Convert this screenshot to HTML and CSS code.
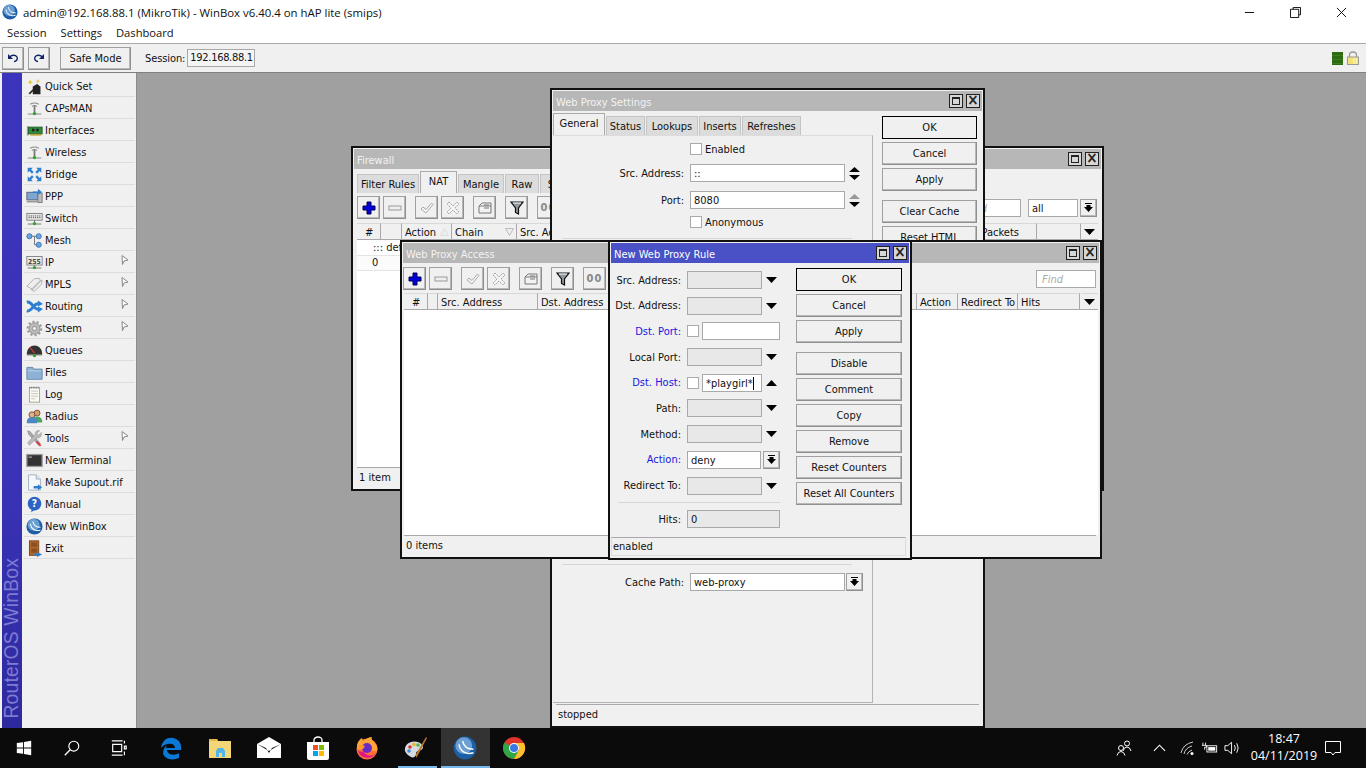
FILE: index.html
```html
<!DOCTYPE html>
<html lang="en">
<head>
    <meta charset="UTF-8">
    <title>WinBox</title>
    <link rel="stylesheet" href="styles.css">
</head>
<body>
    <svg class="defs" width="0" height="0">
        <symbol id="antenna" viewBox="0 0 20 20">
            <path d="M5 5q5-3 10 0M7 7.500q3-2 6 0" fill="none" stroke="#888" stroke-width="1.200"/>
            <path d="M10 7v9" stroke="#777" stroke-width="2"/>
            <path d="M2 16.500h16" stroke="#777"/>
            <circle cx="10" cy="16" r="2" fill="#2fa52f"/>
        </symbol>
        <symbol id="more" viewBox="0 0 8 10">
            <path d="M1 .5l6 4.500-4 1-1.500 3.500z" fill="#fff" stroke="#888"/>
        </symbol>
        <symbol id="down" viewBox="0 0 11 6"><path d="M0 0h11L5.500 6z" fill="#000"/></symbol>
        <symbol id="up" viewBox="0 0 11 6"><path d="M0 6h11L5.500 0z" fill="#000"/></symbol>
        <symbol id="drop" viewBox="0 0 11 10"><path d="M2 0h7v1H2zM3.500 2h4v2h2.500L5.500 9 1 4h2.500z" fill="#000"/></symbol>
        <symbol id="plus" viewBox="0 0 14 14"><path d="M5 1h4v4h4v4H9v4H5V9H1V5h4z" fill="#0000d8" stroke="#000050"/></symbol>
        <symbol id="minus" viewBox="0 0 14 14"><rect x="1" y="5" width="12" height="4" fill="#eee" stroke="#999"/></symbol>
        <symbol id="check" viewBox="0 0 14 14"><path d="M1 8l2-2 3 2.500L11.500 2 13 3.500 6 12z" fill="#f4f4f4" stroke="#aaa"/></symbol>
        <symbol id="cross" viewBox="0 0 14 14"><path d="M3 1l4 4 4-4 2 2-4 4 4 4-2 2-4-4-4 4-2-2 4-4-4-4z" fill="#f4f4f4" stroke="#aaa" stroke-dasharray="2 .6"/></symbol>
        <symbol id="note" viewBox="0 0 14 14"><path d="M1 5l3-3h9v10H1zM1 5h12M6 4h5M6 7h5" fill="#f2f2f2" stroke="#777"/></symbol>
        <symbol id="filter" viewBox="0 0 14 14"><path d="M1 1h12L8.500 7v6l-3-1.500V7z" fill="#8e9aa0" stroke="#111" stroke-width="1.200"/><path d="M3 2h8" stroke="#fff"/></symbol>
        <symbol id="sort-up" viewBox="0 0 9 8"><path d="M.5 7.500h8L4.500.5z" fill="#eee" stroke="#ddd"/></symbol>
        <symbol id="sort-down" viewBox="0 0 9 8"><path d="M.5.5h8l-4 7z" fill="#eee" stroke="#bbb"/></symbol>
        <symbol id="winbox" viewBox="0 0 20 20">
            <circle cx="10" cy="10" r="9.500" fill="#1d5fa6"/>
            <circle cx="9" cy="8" r="7" fill="#6b9fd3"/>
            <path d="M5 7c1 6 6 9 12 7M8 4c1 5 4 7 9 7" fill="none" stroke="#fff" stroke-width="1.200"/>
        </symbol>
    </svg>

    <div class="app-title">
        <svg class="app-logo" viewBox="0 0 20 20"><use href="#winbox"/></svg>
        <span class="app-name">admin@192.168.88.1 (MikroTik) - WinBox v6.40.4 on hAP lite (smips)</span>
        <div class="win-controls">
            <svg viewBox="0 0 12 12"><path d="M1 6h10" stroke="#000"/></svg>
            <svg viewBox="0 0 12 12"><path d="M3.500 2.500v-2h8v8h-2M.5 2.500h9v9h-9z" fill="none" stroke="#000"/></svg>
            <svg viewBox="0 0 12 12"><path d="M1 1l10 10M11 1L1 11" stroke="#000"/></svg>
        </div>
    </div>
    <div class="app-menu">
        <span>Session</span>
        <span>Settings</span>
        <span>Dashboard</span>
    </div>
    <div class="toolbar">
        <button class="btn tool-btn">
            <svg viewBox="0 0 12 12"><path d="M1 2v5h5z" fill="#12246a"/><path d="M2.500 5.500C4 2.500 8.500 2.500 10 5c1 2-.5 4.500-3 4.500" fill="none" stroke="#12246a" stroke-width="1.400"/></svg>
        </button>
        <button class="btn tool-btn">
            <svg viewBox="0 0 12 12"><path d="M11 2v5H6z" fill="#12246a"/><path d="M9.500 5.500C8 2.500 3.500 2.500 2 5c-1 2 .5 4.500 3 4.500" fill="none" stroke="#12246a" stroke-width="1.400"/></svg>
        </button>
        <button class="btn safe-mode">Safe Mode</button>
        <span class="session-label">Session:</span>
        <span class="session-value">192.168.88.1</span>
        <div class="status-icons">
            <span class="green-led"></span>
            <svg class="lock" viewBox="0 0 12 14">
                <path d="M2.500 6V4a3.500 3 0 0 1 7 0v2" fill="none" stroke="#999" stroke-width="1.300"/>
                <rect x=".5" y="6" width="11" height="7.500" fill="#f6e27a" stroke="#999"/>
                <path d="M7 7v6M9.500 7v6" stroke="#fff6b0"/>
            </svg>
        </div>
    </div>

    <div class="main">
        <aside class="sidebar">
            <div class="brand"><span>RouterOS WinBox</span></div>
            <nav class="nav">
                <div class="nav-item">
                    <svg class="nav-icon" viewBox="0 0 20 20"><path d="M3 18l9-9 1.500 1.500-9 9z" fill="#333"/><path d="M8 19V10l5-3 4 3v9z" fill="#222"/><path d="M5 2l1 2 2 1-2 1-1 2-1-2-2-1 2-1zM14 1l.7 2 2 .7-2 .7-.7 2-.7-2-2-.7 2-.7z" fill="#e3c53c"/></svg>
                    Quick Set
                </div>
                <div class="nav-item"><svg class="nav-icon"><use href="#antenna"/></svg>CAPsMAN</div>
                <div class="nav-item">
                    <svg class="nav-icon" viewBox="0 0 20 20"><path d="M1 5h2v11H1z" fill="#999"/><rect x="3" y="6" width="16" height="8" fill="#2e8b3a" stroke="#1b5a25"/><path d="M7 8h3v3H7zM12 8h3v3h-3z" fill="#222"/><path d="M5 14h13v2H5z" fill="#b9a23a"/></svg>
                    Interfaces
                </div>
                <div class="nav-item"><svg class="nav-icon"><use href="#antenna"/></svg>Wireless</div>
                <div class="nav-item">
                    <svg class="nav-icon" viewBox="0 0 20 20"><g fill="#2f7fd0"><path d="M2 2h6L6 4l3 3-2 2-3-3-2 2zM18 2v6l-2-2-3 3-2-2 3-3-2-2zM2 18v-6l2 2 3-3 2 2-3 3 2 2zM18 18h-6l2-2-3-3 2-2 3 3 2-2z"/></g></svg>
                    Bridge
                </div>
                <div class="nav-item">
                    <svg class="nav-icon" viewBox="0 0 20 20"><rect x="1" y="5" width="13" height="9" fill="#7fa6cf" stroke="#557"/><rect x="14" y="6" width="5" height="11" fill="#bbb" stroke="#777"/><path d="M1 15h13v2H1z" fill="#999"/><path d="M8 4h6V1l5 4-5 3V6H8z" fill="#2f7fd0"/></svg>
                    PPP
                </div>
                <div class="nav-item">
                    <svg class="nav-icon" viewBox="0 0 20 20"><rect x="1" y="4" width="18" height="8" fill="#e8e8e8" stroke="#777"/><path d="M3 7h14M3 9h14" stroke="#444" stroke-dasharray="1.500 1"/><path d="M10 12v4M2 16.500h16" stroke="#666"/><circle cx="10" cy="16" r="2" fill="#2fa52f"/></svg>
                    Switch
                </div>
                <div class="nav-item">
                    <svg class="nav-icon" viewBox="0 0 20 20"><path d="M5 5h10M10 5v10h5" fill="none" stroke="#666"/><circle cx="4" cy="5" r="3" fill="#6fa6dd" stroke="#2f6fb0"/><circle cx="15" cy="5" r="3" fill="#6fa6dd" stroke="#2f6fb0"/><circle cx="15" cy="15" r="3" fill="#6fa6dd" stroke="#2f6fb0"/></svg>
                    Mesh
                </div>
                <div class="nav-item">
                    <svg class="nav-icon" viewBox="0 0 20 20"><rect x="1" y="3" width="18" height="10" fill="#eee" stroke="#777"/><text x="10" y="11.500" class="ip-text">255</text><path d="M10 13v3M2 16.500h16" stroke="#666"/><circle cx="10" cy="16" r="2" fill="#2fa52f"/></svg>
                    IP<svg class="more"><use href="#more"/></svg>
                </div>
                <div class="nav-item">
                    <svg class="nav-icon" viewBox="0 0 20 20"><path d="M1 12l9-9h6l1 3-9 10zM6 16l9-9 4-2-1 5-8 8z" fill="#eee" stroke="#aaa"/></svg>
                    MPLS<svg class="more"><use href="#more"/></svg>
                </div>
                <div class="nav-item">
                    <svg class="nav-icon" viewBox="0 0 20 20"><path d="M1 5c6-2 8 10 14 8M1 15c6 2 8-10 14-8" fill="none" stroke="#2f7fd0" stroke-width="3.500"/><path d="M14 3l6 4-6 3zM14 10l6 3-6 4z" fill="#2f7fd0"/></svg>
                    Routing<svg class="more"><use href="#more"/></svg>
                </div>
                <div class="nav-item">
                    <svg class="nav-icon" viewBox="0 0 20 20"><circle cx="10" cy="10" r="6.500" fill="#bbb" stroke="#888" stroke-width="1"/><circle cx="10" cy="10" r="8" fill="none" stroke="#999" stroke-width="2.500" stroke-dasharray="2.500 2.500"/><circle cx="10" cy="10" r="2.500" fill="#eee" stroke="#888"/></svg>
                    System<svg class="more"><use href="#more"/></svg>
                </div>
                <div class="nav-item">
                    <svg class="nav-icon" viewBox="0 0 20 20"><path d="M1 13a9 9 0 0 1 18 0v1H1z" fill="#333"/><path d="M5 7l5 6" stroke="#e33" stroke-width="1.300"/><path d="M1 15h18" stroke="#666" stroke-width="1.500"/><circle cx="10" cy="16" r="2" fill="#2fa52f"/></svg>
                    Queues
                </div>
                <div class="nav-item">
                    <svg class="nav-icon" viewBox="0 0 20 20"><path d="M1 4h7l1 2h10v12H1z" fill="#8db2d6" stroke="#5a82a8"/><path d="M2 8h16" stroke="#c4d8ea"/></svg>
                    Files
                </div>
                <div class="nav-item">
                    <svg class="nav-icon" viewBox="0 0 20 20"><rect x="4" y="2" width="12" height="17" fill="#fbfbf2" stroke="#999"/><path d="M6 6h8M6 9h8M6 12h8M6 15h5" stroke="#bbb"/><path d="M4 2h12" stroke="#777" stroke-dasharray="1 1" stroke-width="2"/></svg>
                    Log
                </div>
                <div class="nav-item">
                    <svg class="nav-icon" viewBox="0 0 20 20"><circle cx="13" cy="6" r="3.500" fill="#d9a06a" stroke="#643"/><path d="M8 17v-3q1-4 5-4t6 4v3z" fill="#4aa564"/><circle cx="7" cy="8" r="3.500" fill="#e3b287" stroke="#643"/><path d="M1 18v-3q1-4 6-4t6 4v3z" fill="#4d86c6"/></svg>
                    Radius
                </div>
                <div class="nav-item">
                    <svg class="nav-icon" viewBox="0 0 20 20"><path d="M2 1l3 1 12 14-2 2L3 5z" fill="#aaa" stroke="#666" stroke-width=".5"/><path d="M18 3l-3 3-2-1 0-2 3-2c-3-1-6 1-5 4L2 15l2 3 9-9c3 1 6-2 5-6z" fill="#bbb" stroke="#777" stroke-width=".5"/><path d="M13 13l5 5-1.500 1.500-5-5z" fill="#d33"/></svg>
                    Tools<svg class="more"><use href="#more"/></svg>
                </div>
                <div class="nav-item">
                    <svg class="nav-icon" viewBox="0 0 20 20"><rect x="1" y="3" width="18" height="14" fill="#333" stroke="#999" stroke-width="1.500"/><path d="M3 6h4" stroke="#ddd"/></svg>
                    New Terminal
                </div>
                <div class="nav-item">
                    <svg class="nav-icon" viewBox="0 0 20 20"><path d="M3 1h9l5 5v13H3z" fill="#f4f8fb" stroke="#9ab"/><path d="M12 1v5h5" fill="#dde" stroke="#9ab"/><path d="M9 14h5v-2l5 3.500-5 3.500v-2H9z" fill="#2f7fd0"/></svg>
                    Make Supout.rif
                </div>
                <div class="nav-item">
                    <svg class="nav-icon" viewBox="0 0 20 20"><circle cx="10" cy="9" r="8" fill="#2b63c4"/><path d="M7 15l-1 4 5-3z" fill="#2b63c4"/><text x="10" y="13.500" class="manual-text">?</text></svg>
                    Manual
                </div>
                <div class="nav-item"><svg class="nav-icon"><use href="#winbox"/></svg>New WinBox</div>
                <div class="nav-item">
                    <svg class="nav-icon" viewBox="0 0 20 20"><rect x="4" y="1" width="11" height="17" fill="#b5682c" stroke="#6d3d17"/><rect x="6" y="3" width="7" height="5" fill="#8e4f20"/><rect x="6" y="10" width="7" height="5" fill="#8e4f20"/><path d="M9 16h4v-2h0l6 3-6 3v-2H9z" fill="#2f7fd0"/></svg>
                    Exit
                </div>
            </nav>
        </aside>

        <main class="desktop">
            <section class="window firewall">
                <div class="win-title"><span>Firewall</span><span class="win-btn-max"></span><span class="win-btn-close"></span></div>
                <div class="tabs">
                    <span class="tab tab-filter">Filter Rules</span>
                    <span class="tab tab-nat tab-active">NAT</span>
                    <span class="tab tab-mangle">Mangle</span>
                    <span class="tab tab-raw">Raw</span>
                    <span class="tab tab-more">Service Ports</span>
                </div>
                <div class="list-tools">
                    <button class="btn icon-btn"><svg><use href="#plus"/></svg></button>
                    <button class="btn icon-btn"><svg><use href="#minus"/></svg></button>
                    <button class="btn icon-btn gap-left"><svg><use href="#check"/></svg></button>
                    <button class="btn icon-btn"><svg><use href="#cross"/></svg></button>
                    <button class="btn icon-btn gap-left"><svg><use href="#note"/></svg></button>
                    <button class="btn icon-btn gap-left"><svg><use href="#filter"/></svg></button>
                    <button class="btn icon-btn gap-left zeros">00</button>
                    <div class="tools-right">
                        <span class="field find-field">Find</span>
                        <span class="field all-field">all</span>
                        <button class="btn drop-btn"><svg><use href="#drop"/></svg></button>
                    </div>
                </div>
                <div class="table">
                    <div class="thead">
                        <span class="th fw-num">#</span>
                        <span class="th fw-blank"></span>
                        <span class="th fw-action">Action<svg class="sort"><use href="#sort-up"/></svg></span>
                        <span class="th fw-chain">Chain<svg class="sort"><use href="#sort-down"/></svg></span>
                        <span class="th fw-src">Src. Address</span>
                        <span class="th fw-packets">Packets</span>
                        <span class="th fw-fill"></span>
                        <span class="th th-menu"><svg><use href="#down"/></svg></span>
                    </div>
                    <div class="tbody">
                        <div class="comment-row">::: def</div>
                        <div class="num-row">0</div>
                    </div>
                </div>
                <div class="status">1 item</div>
            </section>

            <section class="window settings">
                <div class="win-title"><span>Web Proxy Settings</span><span class="win-btn-max"></span><span class="win-btn-close"></span></div>
                <div class="settings-body">
                    <div class="settings-left">
                        <div class="tabs settings-tabs">
                            <span class="tab tab-general tab-active">General</span>
                            <span class="tab tab-status">Status</span>
                            <span class="tab tab-lookups">Lookups</span>
                            <span class="tab tab-inserts">Inserts</span>
                            <span class="tab tab-refreshes">Refreshes</span>
                        </div>
                        <div class="panel">
                            <div class="set-row"><span class="set-label"></span><span class="check"></span><span class="check-text">Enabled</span></div>
                            <div class="set-row src-row"><span class="set-label">Src. Address:</span><span class="field white set-field">::</span><svg class="spin" viewBox="0 0 11 13"><path d="M0 5h11L5.500 0zM0 8h11l-5.500 5z"/></svg></div>
                            <div class="set-row port-row"><span class="set-label">Port:</span><span class="field white set-field">8080</span><svg class="spin" viewBox="0 0 11 13"><path d="M0 5h11L5.500 0z" fill="#999"/><path d="M0 8h11l-5.500 5z"/></svg></div>
                            <div class="set-row anon-row"><span class="set-label"></span><span class="check"></span><span class="check-text">Anonymous</span></div>
                            <hr class="sep">
                            <hr class="sep sep-low">
                            <div class="set-row"><span class="set-label">Cache Path:</span><span class="field white set-field">web-proxy</span><button class="btn drop-btn"><svg><use href="#drop"/></svg></button></div>
                        </div>
                    </div>
                    <div class="actions settings-actions">
                        <button class="btn action-btn default-btn">OK</button>
                        <button class="btn action-btn">Cancel</button>
                        <button class="btn action-btn">Apply</button>
                        <button class="btn action-btn group-start">Clear Cache</button>
                        <button class="btn action-btn">Reset HTML</button>
                    </div>
                </div>
                <div class="status">stopped</div>
            </section>

            <section class="window access">
                <div class="win-title"><span>Web Proxy Access</span><span class="win-btn-max"></span><span class="win-btn-close"></span></div>
                <div class="list-tools">
                    <button class="btn icon-btn"><svg><use href="#plus"/></svg></button>
                    <button class="btn icon-btn"><svg><use href="#minus"/></svg></button>
                    <button class="btn icon-btn gap-left"><svg><use href="#check"/></svg></button>
                    <button class="btn icon-btn"><svg><use href="#cross"/></svg></button>
                    <button class="btn icon-btn gap-left"><svg><use href="#note"/></svg></button>
                    <button class="btn icon-btn gap-left"><svg><use href="#filter"/></svg></button>
                    <button class="btn icon-btn gap-left zeros">00</button>
                    <div class="tools-right">
                        <span class="field find-field access-find">Find</span>
                    </div>
                </div>
                <div class="table">
                    <div class="thead">
                        <span class="th ac-num">#</span>
                        <span class="th ac-blank"></span>
                        <span class="th ac-src">Src. Address</span>
                        <span class="th ac-dst">Dst. Address</span>
                        <span class="th ac-action">Action</span>
                        <span class="th ac-redirect">Redirect To</span>
                        <span class="th ac-hits">Hits</span>
                        <span class="th th-menu"><svg><use href="#down"/></svg></span>
                    </div>
                    <div class="tbody"></div>
                </div>
                <div class="status">0 items</div>
            </section>

            <section class="window rule">
                <div class="win-title active"><span>New Web Proxy Rule</span><span class="win-btn-max"></span><span class="win-btn-close"></span></div>
                <div class="rule-body">
                    <form class="rule-form">
                        <div class="rule-row"><span class="rule-label">Src. Address:</span><span class="field off"></span><svg class="arrow"><use href="#down"/></svg></div>
                        <div class="rule-row"><span class="rule-label">Dst. Address:</span><span class="field off"></span><svg class="arrow"><use href="#down"/></svg></div>
                        <div class="rule-row"><span class="rule-label blue">Dst. Port:</span><span class="check"></span><span class="field white short"></span></div>
                        <div class="rule-row"><span class="rule-label">Local Port:</span><span class="field off"></span><svg class="arrow"><use href="#down"/></svg></div>
                        <div class="rule-row"><span class="rule-label blue">Dst. Host:</span><span class="check"></span><span class="field white host">*playgirl*<i class="caret"></i></span><svg class="arrow arrow-host"><use href="#up"/></svg></div>
                        <div class="rule-row"><span class="rule-label">Path:</span><span class="field off"></span><svg class="arrow"><use href="#down"/></svg></div>
                        <div class="rule-row"><span class="rule-label">Method:</span><span class="field off"></span><svg class="arrow"><use href="#down"/></svg></div>
                        <div class="rule-row"><span class="rule-label blue">Action:</span><span class="field white action-field">deny</span><button class="btn drop-btn" type="button"><svg><use href="#drop"/></svg></button></div>
                        <div class="rule-row"><span class="rule-label">Redirect To:</span><span class="field off"></span><svg class="arrow"><use href="#down"/></svg></div>
                        <hr class="rule-sep">
                        <div class="rule-row"><span class="rule-label">Hits:</span><span class="field off wide">0</span></div>
                    </form>
                    <div class="actions rule-actions">
                        <button class="btn action-btn default-btn">OK</button>
                        <button class="btn action-btn">Cancel</button>
                        <button class="btn action-btn">Apply</button>
                        <button class="btn action-btn group-start">Disable</button>
                        <button class="btn action-btn">Comment</button>
                        <button class="btn action-btn">Copy</button>
                        <button class="btn action-btn">Remove</button>
                        <button class="btn action-btn">Reset Counters</button>
                        <button class="btn action-btn">Reset All Counters</button>
                    </div>
                </div>
                <div class="status">enabled</div>
            </section>
        </main>
    </div>

    <footer class="taskbar">
        <div class="task-icon">
            <svg viewBox="0 0 20 20"><path d="M2 4.500l7-1v6H2zM10 3.300l8-1.300v7.500h-8zM2 10.500h7v6l-7-1zM10 10.500h8V18l-8-1.300z" fill="#fff"/></svg>
        </div>
        <div class="task-icon">
            <svg viewBox="0 0 20 20"><circle cx="12" cy="8" r="5.500" fill="none" stroke="#fff" stroke-width="1.300"/><path d="M8 12l-6 6" stroke="#fff" stroke-width="1.500"/></svg>
        </div>
        <div class="task-icon">
            <svg viewBox="0 0 20 20"><path d="M2 2h12M2 18h12M3 6h10v8H3zM16 2v3M16 8h2v3h-2zM16 14v4" fill="none" stroke="#fff" stroke-width="1.300"/></svg>
        </div>
        <div class="task-icon">
            <svg class="big" viewBox="0 0 24 24"><path d="M2 12C3 4 9 1 14 2c6 1 9 6 8 12H8c0 5 8 6 12 3v5c-7 3-15 1-16-5 0-4 2-7 6-9-2 1-3 2-3 4h9c0-5-9-6-14 0z" fill="#0a78d7"/></svg>
        </div>
        <div class="task-icon">
            <svg class="big" viewBox="0 0 24 24"><path d="M1 3h8l1 2h13v17H1z" fill="#f3d677"/><path d="M1 3h8l1 2H1z" fill="#e5b94a"/><path d="M8 21v-6l2-3h5l2 3v6h-3v-4h-3v4z" fill="#4fb4e8"/></svg>
        </div>
        <div class="task-icon">
            <svg class="big" viewBox="0 0 24 24"><path d="M0 8l12-7 12 7v14H0z" fill="#fff"/><path d="M0 8l12 7L24 8l-9 4-3 5-3-5z" fill="#0b0b0b"/></svg>
        </div>
        <div class="task-icon">
            <svg class="big" viewBox="0 0 24 24"><path d="M8 6V4a4 3 0 0 1 8 0v2" fill="none" stroke="#fff" stroke-width="1.300"/><path d="M1 6h22v16a2 2 0 0 1-2 2H3a2 2 0 0 1-2-2z" fill="#fff"/><path d="M7 9h5v5H7z" fill="#f25022"/><path d="M13 9h5v5h-5z" fill="#7fba00"/><path d="M7 15h5v5H7z" fill="#00a4ef"/><path d="M13 15h5v5h-5z" fill="#ffb900"/></svg>
        </div>
        <div class="task-icon">
            <svg class="big" viewBox="0 0 24 24"><circle cx="12" cy="13" r="10.500" fill="#ff7139"/><path d="M2 9c1-4 3-6 5-7l1 3c3-2 6-4 9-4-1 2 0 3 2 5 3 3 4 6 3 9L2 13z" fill="#ffa436"/><path d="M3 15a10 10 0 0 0 18 2c-4 4-10 3-12-1z" fill="#e31587"/><circle cx="12" cy="12" r="5" fill="#6a2bc4"/><path d="M2 8l8 2-2 3-5-1z" fill="#ff9a2e"/></svg>
        </div>
        <div class="task-icon">
            <svg class="big" viewBox="0 0 24 24"><path d="M1 15C0 8 7 4 14 6c6 2 6 7 3 8s-5 1-5 4-3 4-5 3-5-3-6-6z" fill="#d5dbe0"/><circle cx="6" cy="11" r="1.800" fill="#d33"/><circle cx="10" cy="8.500" r="1.800" fill="#e8b32a"/><circle cx="5" cy="15" r="1.800" fill="#3a8fd8"/><circle cx="14" cy="9" r="1.800" fill="#5ab04a"/><path d="M22 1l1 1-9 17-2 3 0-4z" fill="#b8772c"/></svg>
        </div>
        <div class="task-icon task-current">
            <svg class="big" viewBox="0 0 20 20"><use href="#winbox"/></svg>
        </div>
        <div class="task-icon">
            <svg class="big" viewBox="0 0 24 24"><circle cx="12" cy="12" r="11" fill="#e1352b"/><path d="M12 12L2.500 6.500A11 11 0 0 0 12 23l5-9z" fill="#2fa644"/><path d="M12 7h10a11 11 0 0 1-10 16l5-9z" fill="#fbc02d"/><circle cx="12" cy="12" r="5" fill="#fff"/><circle cx="12" cy="12" r="4" fill="#3b78e7"/></svg>
        </div>
        <div class="tray">
            <svg class="tray-people" viewBox="0 0 16 16"><circle cx="11" cy="3.500" r="2.500" fill="none" stroke="#fff"/><path d="M7 11q1-4 4-4t4 4" fill="none" stroke="#fff"/><circle cx="5" cy="8" r="2.500" fill="#0b0b0b" stroke="#fff"/><path d="M1 15.500q1-4 4-4t4 4" fill="none" stroke="#fff"/></svg>
            <svg class="tray-caret" viewBox="0 0 14 8"><path d="M1 7l6-6 6 6" fill="none" stroke="#fff" stroke-width="1.200"/></svg>
            <svg class="tray-wifi" viewBox="0 0 16 16"><path d="M1 13Q3 4 13 2M4 14q1-6 8-8M7 14.500q1-3 5-4.500" fill="none" stroke="#ccc"/><circle cx="12" cy="13.500" r="1.500" fill="#fff"/></svg>
            <svg class="tray-power" viewBox="0 0 18 14"><path d="M1 1v3M4 1v3M0 4h5v2H3v3" fill="none" stroke="#fff"/><rect x="5.500" y="4.500" width="11" height="7" fill="none" stroke="#fff"/><rect x="7" y="6" width="8" height="4" fill="#fff"/></svg>
            <svg class="tray-sound" viewBox="0 0 18 16"><path d="M1 5.500h3L8 2v12L4 10.500H1z" fill="none" stroke="#fff"/><path d="M11 5q2 3 0 6M13.500 3q3 5 0 10" fill="none" stroke="#fff"/></svg>
            <div class="clock"><span>18:47</span><span>04/11/2019</span></div>
            <svg class="tray-note" viewBox="0 0 16 15"><path d="M.5.500h15v11H10L8 14l-2-2.500H.5z" fill="none" stroke="#fff"/></svg>
        </div>
    </footer>
</body>
</html>
```

FILE: styles.css
```css
* {
    box-sizing: border-box;
}

html, body {
    margin: 0;
    width: 1366px;
    height: 768px;
    overflow: hidden;
}

body {
    display: flex;
    flex-direction: column;
    background-color: #fff;
    font-family: "DejaVu Sans Condensed", "Liberation Sans", Arial, sans-serif;
    font-size: 11px;
    color: #111;
}

button {
    font: inherit;
    color: inherit;
    padding: 0;
}

.defs {
    position: absolute;
}

/* app header */
.app-title {
    display: flex;
    align-items: center;
    height: 24px;
    padding-left: 2px;
    font-family: "Open Sans", sans-serif;
}

.app-logo {
    width: 16px;
    height: 16px;
    margin-right: 5px;
}

.app-name {
    font-size: 11.400px;
}

.win-controls {
    display: flex;
    margin-left: auto;
    margin-right: 19px;
    gap: 35px;
}

.win-controls svg {
    width: 11px;
    height: 11px;
}

.app-menu {
    display: flex;
    gap: 14px;
    height: 19px;
    padding-left: 7px;
    font-family: "Open Sans", sans-serif;
    font-size: 11.200px;
    line-height: 18px;
}

.toolbar {
    display: flex;
    align-items: center;
    height: 30px;
    padding-left: 2px;
    background-color: #f0f0f0;
    border-top: 1px solid #a8a8a8;
    border-bottom: 1px solid #808080;
}

.btn {
    background-color: #f0f0f0;
    border: 1px solid #a0a0a0;
    border-right-color: #8f8f8f;
    border-bottom-color: #8f8f8f;
    box-shadow: inset -1px -1px 0 #b8b8b8;
}

.tool-btn {
    display: flex;
    align-items: center;
    justify-content: center;
    width: 22px;
    height: 23px;
    margin-right: 4px;
}

.tool-btn svg {
    width: 12px;
    height: 12px;
}

.safe-mode {
    width: 71px;
    height: 23px;
    margin-left: 6px;
}

.session-label {
    margin-left: 14px;
    letter-spacing: -0.1px;
}

.session-value {
    width: 68px;
    height: 18px;
    margin-left: 2px;
    padding-left: 2px;
    background-color: #f4f4f4;
    border: 1px solid #a8a8a8;
    line-height: 16px;
    letter-spacing: -0.3px;
    white-space: nowrap;
}

.status-icons {
    display: flex;
    align-items: center;
    gap: 4px;
    margin-left: auto;
    margin-right: 7px;
}

.green-led {
    width: 11px;
    height: 13px;
    background: repeating-linear-gradient(#2e6a12 0 3px, #3d7d1e 3px 4px);
}

.lock {
    width: 12px;
    height: 14px;
}

/* sidebar */
.main {
    display: flex;
    flex: 1;
    min-height: 0;
}

.sidebar {
    display: flex;
    width: 137px;
    padding-left: 2px;
    background-color: #f0f0f0;
    border-right: 1px solid #8c8c8c;
}

.brand {
    display: flex;
    justify-content: center;
    align-items: flex-end;
    width: 20px;
    padding-bottom: 9px;
    background: linear-gradient(#3b34bd, #3a33b8 60%, #2d2a9e);
}

.brand span {
    writing-mode: vertical-rl;
    transform: rotate(180deg);
    font-family: "Liberation Sans", Arial, sans-serif;
    font-size: 19.300px;
    letter-spacing: 0.2px;
    line-height: 20px;
    white-space: nowrap;
    color: #7f7bd2;
}

.nav {
    flex: 1;
    padding: 2px 1px 0 2px;
}

.nav-item {
    display: flex;
    align-items: center;
    height: 22px;
    padding-left: 2px;
    padding-top: 1px;
    border-bottom: 1px solid #dcdcdc;
    white-space: nowrap;
}

.nav-icon {
    flex: none;
    width: 17px;
    height: 17px;
    margin-right: 2px;
}

.more {
    width: 8px;
    height: 10px;
    margin-left: auto;
    margin-right: 6px;
    margin-bottom: 4px;
}

.ip-text {
    font-size: 8px;
    font-weight: bold;
    text-anchor: middle;
    fill: #444;
}

.manual-text {
    font-size: 12px;
    font-weight: bold;
    text-anchor: middle;
    fill: #fff;
}

/* desktop and windows */
.desktop {
    position: relative;
    flex: 1;
    background-color: #a0a0a0;
}

.window {
    position: absolute;
    display: flex;
    flex-direction: column;
    padding: 1px;
    background-color: #f0f0f0;
    border: 2px solid #111;
}

.firewall {
    left: 214px;
    top: 73px;
    width: 753px;
    height: 345px;
}

.settings {
    left: 413px;
    top: 15px;
    width: 435px;
    height: 640px;
}

.access {
    left: 263px;
    top: 167px;
    width: 702px;
    height: 319px;
}

.rule {
    left: 471px;
    top: 167px;
    width: 304px;
    height: 320px;
}

.win-title {
    display: flex;
    align-items: center;
    flex: none;
    gap: 3px;
    height: 20px;
    padding-left: 3px;
    padding-right: 2px;
    background-color: #b7b7b7;
    color: #f2f2f2;
}

.win-title span:first-child {
    margin-right: auto;
    padding-top: 2px;
}

.win-title.active {
    background-color: #4a50c6;
    color: #fff;
}

.win-btn-max,
.win-btn-close {
    position: relative;
    width: 14px;
    height: 14px;
    background-color: #d6d6d6;
    border: 1px solid #222;
}

.win-btn-max::after {
    content: "";
    position: absolute;
    inset: 2px;
    border: 1px solid #222;
    border-top-width: 2px;
}

.win-btn-close::after {
    content: "\00d7";
    position: absolute;
    inset: 0;
    font-size: 15px;
    font-weight: bold;
    line-height: 11px;
    text-align: center;
    color: #222;
}

.tabs {
    display: flex;
    flex: none;
    align-items: flex-end;
    height: 23px;
    padding-left: 3px;
    gap: 1px;
    overflow: hidden;
}

.firewall .tabs {
    height: 24px;
}

.tab {
    flex: none;
    height: 19px;
    background-color: #dcdcdc;
    border: 1px solid #c4c4c4;
    border-bottom: 0;
    line-height: 20px;
    text-align: center;
    white-space: nowrap;
}

.tab-active {
    height: 22px;
    background-color: #f0f0f0;
    border-color: #aaa;
    line-height: 20px;
}

.tab-filter { width: 62px; }
.tab-nat { width: 37px; }
.tab-mangle { width: 46px; }
.tab-raw { width: 34px; }
.tab-more { width: 80px; }
.tab-general { width: 52px; }
.tab-status { width: 39px; }
.tab-lookups { width: 52px; }
.tab-inserts { width: 42px; }
.tab-refreshes { width: 59px; }

.list-tools {
    display: flex;
    flex: none;
    align-items: center;
    height: 30px;
    padding: 0 4px 0 3px;
    gap: 3px;
}

.firewall .list-tools {
    padding-top: 1px;
    padding-bottom: 2px;
}

.access .list-tools {
    padding: 1px 3px 0 0;
}

.icon-btn {
    display: flex;
    align-items: center;
    justify-content: center;
    flex: none;
    width: 23px;
    height: 23px;
}

.icon-btn svg {
    width: 14px;
    height: 14px;
}

.gap-left {
    margin-left: 6px;
}

.zeros {
    font-weight: bold;
    font-size: 11px;
    letter-spacing: 1px;
    color: #888;
}

.tools-right {
    display: flex;
    align-items: center;
    gap: 2px;
    margin-left: auto;
}

.field {
    display: block;
    flex: none;
    height: 18px;
    padding-left: 3px;
    border: 1px solid #a9a9a9;
    line-height: 17px;
    white-space: nowrap;
}

.find-field {
    width: 61px;
    margin-right: 5px;
    padding-left: 5px;
    background-color: #fff;
    font-style: italic;
    color: #aaa;
}

.access-find {
    width: 60px;
    margin-right: 0;
}

.all-field {
    width: 50px;
    background-color: #fff;
}

.drop-btn {
    display: flex;
    align-items: center;
    justify-content: center;
    flex: none;
    width: 17px;
    height: 18px;
}

.drop-btn svg {
    width: 11px;
    height: 10px;
}

.table {
    display: flex;
    flex: 1;
    flex-direction: column;
    margin: 0 3px;
    min-height: 0;
    background-color: #fff;
}

.access .table {
    margin: 0 1px;
}

.thead {
    display: flex;
    flex: none;
    height: 17px;
    background-color: #f0f0f0;
    border-bottom: 1px solid #a9a9a9;
}

.th {
    display: flex;
    align-items: center;
    flex: none;
    padding-left: 3px;
    padding-top: 1px;
    border-right: 1px solid #a9a9a9;
    border-top: 1px solid #d8d8d8;
    white-space: nowrap;
    overflow: hidden;
}

.th-menu {
    justify-content: center;
    width: 17px;
    margin-left: auto;
    padding-left: 0;
    border-right: 0;
}

.th-menu svg {
    width: 11px;
    height: 6px;
}

.sort {
    width: 9px;
    height: 8px;
    margin-left: auto;
    margin-right: 2px;
}

.fw-num { width: 24px; padding-left: 8px; }
.fw-blank { width: 21px; }
.fw-action { width: 50px; }
.fw-chain { width: 65px; }
.fw-src { width: 301px; }
.fw-packets { width: 219px; justify-content: flex-end; padding-right: 17px; }
.fw-fill { width: 44px; }

.ac-num { width: 24px; padding-left: 8px; }
.ac-blank { width: 10px; }
.ac-src { width: 100px; }
.ac-dst { width: 379px; }
.ac-action { width: 41px; }
.ac-redirect { width: 60px; }
.ac-hits { width: 62px; }

.tbody {
    flex: 1;
}

.comment-row,
.num-row {
    height: 15px;
    padding-left: 16px;
    line-height: 16px;
    white-space: nowrap;
}

.num-row {
    height: 16px;
    padding-left: 15px;
    line-height: 14px;
    background-color: #fbfbfb;
    border-top: 1px solid #e4e4e4;
    border-bottom: 1px solid #e4e4e4;
}

.status {
    flex: none;
    height: 20px;
    margin: 0 3px 1px;
    padding-left: 2px;
    border-top: 1px solid #a9a9a9;
    line-height: 19px;
}

.access .status {
    margin-left: 1px;
}

/* web proxy settings */
.settings-body {
    display: flex;
    flex: 1;
    min-height: 0;
}

.settings-left {
    display: flex;
    flex-direction: column;
    width: 320px;
}

.settings-tabs {
    height: 24px;
    padding-left: 0;
}

.panel {
    flex: 1;
    margin-bottom: 1px;
    padding-top: 4px;
    border-top: 1px solid #dcdcdc;
    border-right: 1px solid #b4b4b4;
    border-bottom: 1px solid #b4b4b4;
}

.set-row {
    display: flex;
    align-items: center;
    height: 18px;
    margin-bottom: 6px;
}

.src-row {
    margin-bottom: 9px;
}

.port-row {
    margin-bottom: 4px;
}

.anon-row {
    margin-bottom: 7px;
}

.set-label {
    width: 131px;
    margin-right: 6px;
    text-align: right;
}

.check {
    flex: none;
    width: 12px;
    height: 12px;
    background-color: #fff;
    border: 1px solid #aaa;
}

.check-text {
    margin-left: 3px;
}

.set-field {
    width: 155px;
}

.white {
    background-color: #fff;
}

.spin {
    width: 11px;
    height: 13px;
    margin-left: 4px;
}

.set-row .drop-btn {
    margin-left: 1px;
}

.sep {
    height: 0;
    margin: 0 0 0 9px;
    border: 0;
    border-top: 1px solid #d6d6d6;
    width: 290px;
}

.sep-low {
    margin-top: 325px;
    margin-bottom: 8px;
}

.actions {
    display: flex;
    flex: none;
    flex-direction: column;
    gap: 3px;
}

.action-btn {
    height: 23px;
    white-space: nowrap;
}

.default-btn {
    border-color: #000;
    box-shadow: none;
}

.group-start {
    margin-top: 6px;
}

.settings-actions {
    width: 95px;
    margin-left: 9px;
    padding-top: 5px;
}

/* new rule dialog */
.rule-body {
    display: flex;
    flex: 1;
    min-height: 0;
}

.rule-form {
    width: 171px;
    margin: 0;
    padding-top: 8px;
}

.rule-row {
    display: flex;
    align-items: center;
    height: 18px;
    margin-bottom: 7.700px;
}

.rule-label {
    flex: none;
    width: 70px;
    margin-right: 6px;
    text-align: right;
    white-space: nowrap;
}

.blue {
    color: #1818e0;
}

.off {
    width: 75px;
    background-color: #e8e8e8;
}

.short {
    width: 78px;
    margin-left: 3px;
}

.host {
    width: 60px;
    margin-left: 3px;
    overflow: hidden;
}

.caret {
    display: inline-block;
    width: 1px;
    height: 13px;
    vertical-align: middle;
    background-color: #000;
}

.arrow {
    width: 11px;
    height: 6px;
    margin-left: 4px;
}

.action-field {
    width: 74px;
}

.rule-row .drop-btn {
    margin-left: 2px;
}

.wide {
    width: 93px;
}

.rule-sep {
    width: 162px;
    height: 0;
    margin: 0 0 7px 7px;
    border: 0;
    border-top: 1px solid #d6d6d6;
}

.rule-actions {
    width: 106px;
    margin-left: 14px;
    padding-top: 5px;
}

.rule .status {
    height: 19px;
    margin: 0 3px 1px 0;
    padding-left: 1px;
    border: 1px solid #dcdcdc;
    border-top-color: #a9a9a9;
    line-height: 18px;
}

/* taskbar */
.taskbar {
    display: flex;
    flex: none;
    align-items: stretch;
    height: 40px;
    background-color: #0b0b0b;
    color: #fff;
    font-family: "Open Sans", sans-serif;
}

.task-icon {
    display: flex;
    align-items: center;
    justify-content: center;
    width: 49px;
    position: relative;
}

.task-icon:nth-child(1),
.task-icon:nth-child(2) {
    width: 48px;
}

.task-icon:nth-child(3) {
    width: 46px;
}

.task-icon:nth-child(4) {
    margin-left: 4.500px;
}

.task-icon svg {
    width: 18px;
    height: 18px;
}

.task-icon svg.big {
    width: 24px;
    height: 24px;
}

.task-current {
    background-color: #333;
}

.task-icon:nth-child(9)::after,
.task-current::after {
    content: "";
    position: absolute;
    left: 0;
    right: 0;
    bottom: 0;
    height: 2px;
    background-color: #76b9ed;
}

.task-icon:nth-child(9)::after {
    left: 6px;
    right: 4px;
}

.tray {
    display: flex;
    align-items: center;
    margin-left: auto;
}

.tray-people { width: 16px; height: 16px; margin-right: 21px; }
.tray-caret { width: 13px; height: 8px; margin-right: 14px; }
.tray-wifi { width: 16px; height: 16px; margin-right: 6px; }
.tray-power { width: 16px; height: 14px; margin-right: 6px; }
.tray-sound { width: 17px; height: 16px; margin-right: 10px; }

.clock {
    display: flex;
    flex-direction: column;
    align-items: center;
    width: 66px;
    padding-bottom: 2px;
    font-size: 12.500px;
    line-height: 17px;
}

.tray-note {
    width: 16px;
    height: 15px;
    margin-left: 8px;
    margin-right: 25px;
}
```
